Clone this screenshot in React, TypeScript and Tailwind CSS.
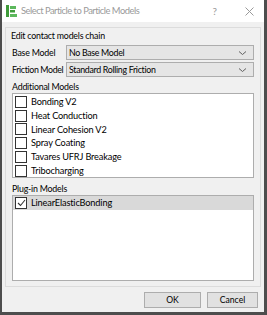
import React from 'react';

const additional = [
  'Bonding V2',
  'Heat Conduction',
  'Linear Cohesion V2',
  'Spray Coating',
  'Tavares UFRJ Breakage',
  'Tribocharging',
];

const Chevron = () => (
  <svg width="9" height="6" viewBox="0 0 9 6" fill="none">
    <path d="M1 1.5 L4.5 4.5 L8 1.5" stroke="#606060" strokeWidth="1" />
  </svg>
);

const Check = ({ checked }: { checked?: boolean }) => (
  <div className="w-[12px] h-[12px] border border-[#333] bg-white flex items-center justify-center shrink-0">
    {checked && (
      <svg width="9" height="8" viewBox="0 0 9 8" fill="none">
        <path d="M1 4 L3.5 6.5 L8 1" stroke="#333" strokeWidth="1.1" />
      </svg>
    )}
  </div>
);

const Combo = ({ value }: { value: string }) => (
  <div className="flex-1 h-[15px] bg-[#e5e5e5] border border-[#adadad] flex items-center justify-between pl-[2px] pr-[6px] text-[8.8px] tracking-[-0.3px] text-black">
    <span className="whitespace-nowrap">{value}</span>
    <Chevron />
  </div>
);

export default function App() {
  return (
    <div
      className="w-[267px] h-[315px] bg-[#4d4d4d] pl-[2px] pr-[3px] pb-[3px] flex flex-col"
      style={{ fontFamily: 'Lato, "Noto Sans", sans-serif' }}
    >
      {/* title bar */}
      <div className="h-[22px] bg-white flex items-center shrink-0">
        <svg className="ml-[4px]" width="11" height="12" viewBox="0 0 11 12">
          <rect x="0" y="0" width="3" height="12" fill="#3f9b3a" />
          <rect x="4" y="1" width="6" height="3" fill="#5cb85c" />
          <rect x="4" y="5" width="5" height="2.5" fill="#3f9b3a" />
          <rect x="4" y="9" width="7" height="3" fill="#5cb85c" />
        </svg>
        <span className="ml-[4px] text-[9.4px] tracking-[-0.5px] text-[#9a9a9a] whitespace-nowrap">Select Particle to Particle Models</span>
        <span className="ml-auto text-[10px] text-[#9a9a9a] mr-[28px]">?</span>
        <svg className="mr-[10px]" width="9" height="9" viewBox="0 0 9 9">
          <path d="M0.5 0.5 L8.5 8.5 M8.5 0.5 L0.5 8.5" stroke="#9a9a9a" strokeWidth="1" />
        </svg>
      </div>

      {/* body */}
      <div className="flex-1 bg-[#f0f0f0] flex flex-col px-[3px] pt-[5px]">
        <div className="h-[260px] border border-[#dcdcdc] flex flex-col pl-[5px] pr-[6px] text-[8.8px] tracking-[-0.2px] text-black">
          <div className="h-[13px] mt-[1px] flex items-center whitespace-nowrap">Edit contact models chain</div>

          <div className="mt-[3px] flex items-center h-[15px]">
            <span className="w-[55px] shrink-0 whitespace-nowrap pl-[1px]">Base Model</span>
            <Combo value="No Base Model" />
          </div>
          <div className="mt-[2px] flex items-center h-[15px]">
            <span className="w-[55px] shrink-0 whitespace-nowrap pl-[1px] tracking-[-0.35px]">Friction Model</span>
            <Combo value="Standard Rolling Friction" />
          </div>

          <div className="mt-[3px] h-[13px] flex items-center pl-[1px]">Additional Models</div>
          <div className="ml-[1px] h-[85px] bg-white border border-[#adadad] flex flex-col pt-[1px]">
            {additional.map((a) => (
              <div key={a} className="h-[14px] flex items-center pl-[2px] gap-[4px] text-[9.2px] tracking-[-0.15px]">
                <Check />
                <span className="whitespace-nowrap">{a}</span>
              </div>
            ))}
          </div>

          <div className="mt-[4px] h-[13px] flex items-center pl-[1px]">Plug-in Models</div>
          <div className="ml-[1px] h-[86px] bg-white border border-[#adadad] flex flex-col">
            <div className="h-[14px] bg-[#d9d9d9] flex items-center pl-[2px] gap-[4px] text-[9.2px] tracking-[-0.15px]">
              <Check checked />
              <span>LinearElasticBonding</span>
            </div>
          </div>
        </div>

        <div className="flex justify-end gap-[6px] mt-[5px] pr-[3px]">
          <button className="w-[57px] h-[16px] bg-[#e1e1e1] border border-[#adadad] text-[8.6px] text-black">OK</button>
          <button className="w-[51px] h-[16px] bg-[#e1e1e1] border border-[#adadad] text-[8.6px] text-black">Cancel</button>
        </div>
      </div>
    </div>
  );
}
